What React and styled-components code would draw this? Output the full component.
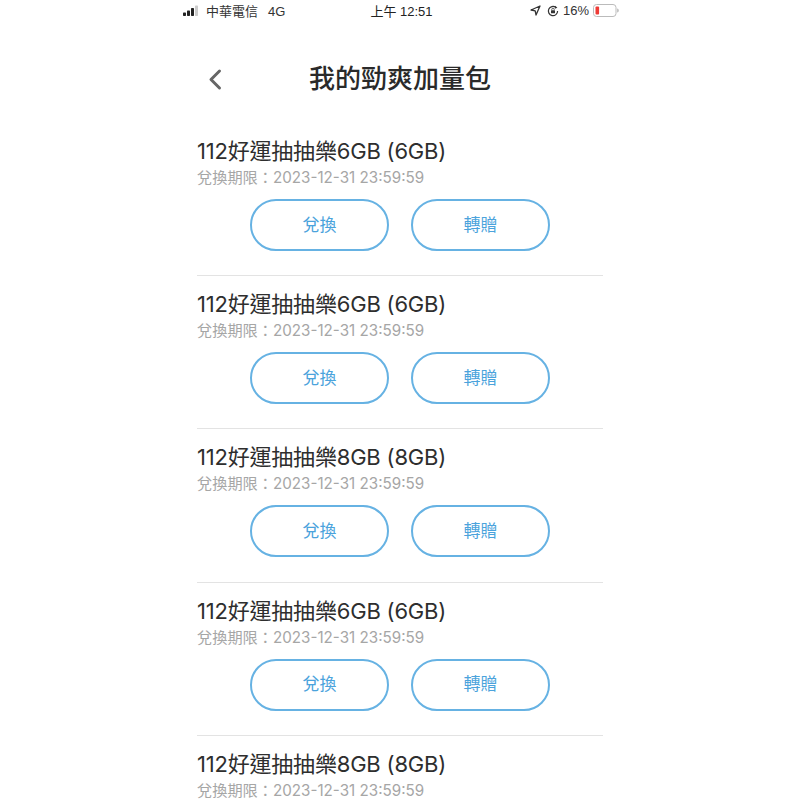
import React from 'react';
import styled, { createGlobalStyle } from 'styled-components';

const Global = createGlobalStyle`
  html, body { margin: 0; padding: 0; background: #fff; }
  body { font-family: "Inter", "Liberation Sans", "Noto Sans CJK TC", sans-serif; }
`;
const cjk = `"Liberation Sans", "Noto Sans CJK TC", sans-serif`;
const latin = `"Inter", "Noto Sans CJK TC", sans-serif`;

const Page = styled.div`
  width: 800px; height: 800px; overflow: hidden; display: flex; justify-content: center; align-items: flex-start; background: #fff;
`;
const Phone = styled.div`
  width: 450px; display: flex; flex-direction: column; flex-shrink: 0;
`;
const StatusBar = styled.div`
  height: 21px; display: grid; grid-template-columns: 1fr auto 1fr; align-items: center;
  padding: 0 5px 0 8px; font-family: ${cjk}; font-size: 13px; color: #333;
`;
const StatusLeft = styled.div`display: flex; align-items: center; gap: 5px;`;
const StatusRight = styled.div`display: flex; align-items: center; justify-content: flex-end; gap: 4px;`;
const Clock = styled.div`font-size: 13px; color: #222;`;
const Net = styled.span`margin-left: 10px;`;
const Header = styled.div`
  height: 56px; margin-top: 30px; display: flex; align-items: center; justify-content: center; position: relative;
`;
const Back = styled.div`
  position: absolute; left: 31px; top: 15px; width: 18px; height: 26px; display: flex;
`;
const Title = styled.h1`
  margin: 0 0 5px; font-family: ${cjk}; font-size: 26px; font-weight: 500; color: #2a2a2a;
`;
const List = styled.div`
  padding: 16px 22px 0 22px; display: flex; flex-direction: column;
`;
const Item = styled.div`
  height: 153.2px; box-sizing: border-box; border-bottom: 1px solid #e3e3e3; flex-shrink: 0;
  display: flex; flex-direction: column; padding-top: 14px;
`;
const ItemTitle = styled.div`
  font-family: ${latin}; font-size: 22px; letter-spacing: -0.2px; line-height: 28px; color: #2e2e2e;
`;
const Expire = styled.div`
  font-family: ${latin}; font-size: 15.2px; line-height: 20px; margin-top: 3px; color: #a6a6a6;
`;
const Actions = styled.div`
  display: flex; justify-content: center; gap: 22px; margin-top: 11px;
`;
const Pill = styled.button`
  width: 139px; height: 52px; box-sizing: border-box; border: 2px solid #66b2e3; border-radius: 26px;
  background: #fff; color: #4ba3dc; font-family: ${cjk}; font-size: 17px; padding: 0 0 4px;
`;
const RotateSvg = styled.svg`margin-left: 2px;`;

const Signal = () => (
  <svg width="18" height="12" viewBox="0 0 18 12">
    <rect x="0" y="7.5" width="3" height="3.5" rx="0.7" fill="#222" />
    <rect x="4" y="5.5" width="3" height="5.5" rx="0.7" fill="#222" />
    <rect x="8" y="3" width="3" height="8" rx="0.7" fill="#222" />
    <rect x="12" y="0.5" width="3" height="10.5" rx="0.7" fill="#ccc" />
  </svg>
);
const Locate = () => (
  <svg width="11" height="11" viewBox="0 0 11 11">
    <path d="M10 1 L1 5 L5.2 5.8 L6 10 Z" fill="none" stroke="#333" strokeWidth="1.3" strokeLinejoin="round" />
  </svg>
);
const RotateLock = () => (
  <RotateSvg width="12" height="12" viewBox="0 0 12 12">
    <path d="M10.6 6 A4.6 4.6 0 1 1 8.8 2.4" fill="none" stroke="#333" strokeWidth="1.2" />
    <path d="M8.2 0.8 L10.4 2.8 L7.8 3.8 Z" fill="#333" />
    <rect x="4" y="5.2" width="4" height="3" rx="0.5" fill="#333" />
    <path d="M4.8 5.2 V4.4 A1.2 1.2 0 0 1 7.2 4.4 V5.2" fill="none" stroke="#333" strokeWidth="0.8" />
  </RotateSvg>
);
const Battery = () => (
  <svg width="27" height="13" viewBox="0 0 27 13">
    <rect x="0.5" y="0.5" width="22.5" height="12" rx="3" fill="none" stroke="#bbb" />
    <rect x="2.5" y="2.5" width="3.6" height="8" rx="1" fill="#ee3b36" />
    <path d="M24.3 4.5 C25.3 4.8 25.6 5.5 25.6 6.5 C25.6 7.5 25.3 8.2 24.3 8.5 Z" fill="#aaa" />
  </svg>
);
const Chevron = () => (
  <svg width="18" height="26" viewBox="0 0 18 26">
    <path d="M13.5 5 L5 13.5 L13.5 22" fill="none" stroke="#666" strokeWidth="3" strokeLinecap="round" strokeLinejoin="round" />
  </svg>
);

const items = ['6', '6', '8', '6', '8'];

export default function App() {
  return (
    <Page>
      <Global />
      <Phone>
        <StatusBar>
          <StatusLeft>
            <Signal />
            <span>中華電信<Net>4G</Net></span>
          </StatusLeft>
          <Clock>上午 12:51</Clock>
          <StatusRight>
            <Locate />
            <RotateLock />
            <span>16%</span>
            <Battery />
          </StatusRight>
        </StatusBar>
        <Header>
          <Back><Chevron /></Back>
          <Title>我的勁爽加量包</Title>
        </Header>
        <List>
          {items.map((g, i) => (
            <Item key={i}>
              <ItemTitle>112好運抽抽樂{g}GB ({g}GB)</ItemTitle>
              <Expire>兌換期限：2023-12-31 23:59:59</Expire>
              {i < 4 && (
                <Actions>
                  <Pill>兌換</Pill>
                  <Pill>轉贈</Pill>
                </Actions>
              )}
            </Item>
          ))}
        </List>
      </Phone>
    </Page>
  );
}
